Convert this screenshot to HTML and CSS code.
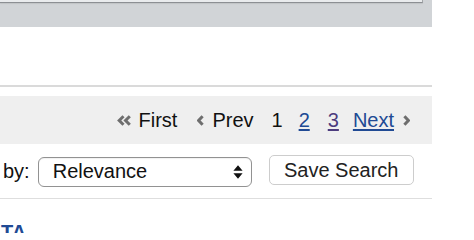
FILE: index.html
```html
<!DOCTYPE html>
<html>
<head>
<meta charset="utf-8">
<link rel="stylesheet" href="styles.css">
</head>
<body>
<div class="page">
  <div class="topbar"><div class="searchbox"></div></div>
  <div class="spacer"></div>
  <div class="pager">
    <svg class="dbl" width="15" height="11" viewBox="0 0 15 11"><path d="M6.5 1.2 L2.2 5.5 L6.5 9.8 M12.8 1.2 L8.5 5.5 L12.8 9.8" fill="none" stroke="#6e6e6e" stroke-width="3"/></svg>
    <span class="pg first">First</span>
    <svg class="sgl prev-ic" width="7" height="11" viewBox="0 0 7 11"><path d="M5.6 1.2 L1.6 5.5 L5.6 9.8" fill="none" stroke="#6e6e6e" stroke-width="3"/></svg>
    <span class="pg prev">Prev</span>
    <span class="pg cur">1</span>
    <a class="pg num n2" href="#">2</a>
    <a class="pg num n3 visited" href="#">3</a>
    <a class="pg next" href="#">Next</a>
    <svg class="sgl next-ic" width="7" height="11" viewBox="0 0 7 11"><path d="M1.4 1.2 L5.4 5.5 L1.4 9.8" fill="none" stroke="#6e6e6e" stroke-width="3"/></svg>
  </div>
  <div class="sortrow">
    <span class="bylabel">by:</span>
    <div class="select">
      <span>Relevance</span>
      <svg width="10" height="14" viewBox="0 0 10 14"><path d="M5 0.3 L9.6 5.8 L0.4 5.8 Z M5 13.7 L9.6 8.2 L0.4 8.2 Z" fill="#111"/></svg>
    </div>
    <button class="savebtn">Save Search</button>
  </div>
  <h2 class="result">TA</h2>
</div>
</body>
</html>
```
FILE: styles.css
```css
html, body {
  margin: 0;
  padding: 0;
  background: #fff;
  overflow: hidden;
}
body {
  font-family: "Liberation Sans", Arial, sans-serif;
  width: 474px;
  height: 233px;
}
.page {
  width: 432px;
}
.topbar {
  height: 27px;
  background: #d1d4d7;
}
.searchbox {
  width: 423px;
  height: 3px;
  box-sizing: border-box;
  background: #e9ebed;
  border-bottom: 1px solid #8c8f93;
  border-right: 1px solid #a3a6a9;
  box-shadow: 0 1px 1px rgba(0,0,0,0.08);
}
.spacer {
  height: 58px;
  border-bottom: 2px solid #dadada;
}
.pager {
  margin-top: 9px;
  height: 48px;
  background: #efefef;
  display: flex;
  align-items: center;
  justify-content: flex-end;
  padding-right: 22px;
  font-size: 20px;
  line-height: 23px;
}
.pg {
  color: #111;
}
.dbl { margin-right: 6px; }
.prev-ic { margin-left: 20px; margin-right: 8px; }
.cur { margin-left: 18px; }
.n2 { margin-left: 16px; }
.n3 { margin-left: 18px; }
.next { margin-left: 14px; }
.next-ic { margin-left: 9px; }
a.pg {
  color: #204a94;
  text-decoration: underline;
  text-underline-offset: 2px;
}
a.pg.visited {
  color: #4c3c7e;
}
.sortrow {
  height: 55px;
  box-sizing: border-box;
  border-bottom: 1px solid #dedede;
  display: flex;
  align-items: center;
  font-size: 20px;
}
.bylabel {
  margin-left: 3px;
  color: #111;
}
.select {
  margin-left: 8px;
  width: 214px;
  height: 30px;
  box-sizing: border-box;
  border: 1px solid #929292;
  border-radius: 6px;
  box-shadow: inset 0 1px 1px rgba(0,0,0,0.06);
  display: flex;
  align-items: center;
  justify-content: space-between;
  padding: 0 8px 0 14px;
  color: #111;
  margin-top: 1px;
}
.savebtn {
  margin-left: 17px;
  width: 145px;
  height: 30px;
  box-sizing: border-box;
  border: 1px solid #cdcdcd;
  border-radius: 5px;
  background: #fff;
  font-family: "Liberation Sans", Arial, sans-serif;
  font-size: 20px;
  color: #222;
  padding: 0;
  margin-top: -2px;
}
.result {
  margin: 22px 0 0 1px;
  font-size: 20px;
  line-height: 23px;
  font-weight: bold;
  color: #204a94;
}
```
